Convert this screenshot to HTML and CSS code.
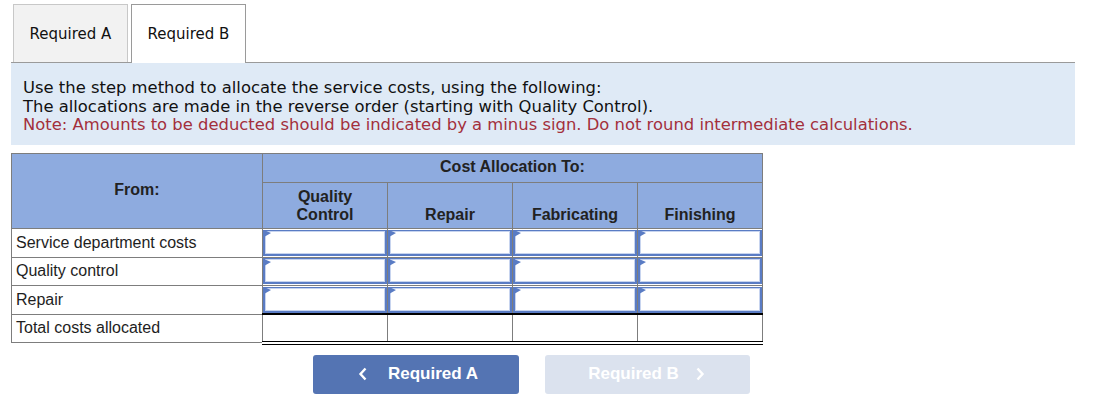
FILE: index.html
```html
<!DOCTYPE html>
<html lang="en">
<head>
  <meta charset="UTF-8" />
  <title>Step Method Allocation</title>
  <link rel="stylesheet" href="styles.css">
</head>
<body>
  <div class="tabs">
    <div class="tab">Required A</div>
    <div class="tab active">Required B</div>
  </div>

  <div class="info">
    <div>Use the step method to allocate the service costs, using the following:</div>
    <div>The allocations are made in the reverse order (starting with Quality Control).</div>
    <div class="note">Note: Amounts to be deducted should be indicated by a minus sign. Do not round intermediate calculations.</div>
  </div>

  <table class="alloc">
    <thead>
      <tr>
        <th rowspan="2" class="from">From:</th>
        <th colspan="4" class="group">Cost Allocation To:</th>
      </tr>
      <tr class="dept">
        <th>Quality<br>Control</th>
        <th>Repair</th>
        <th>Fabricating</th>
        <th>Finishing</th>
      </tr>
    </thead>
    <tbody>
      <tr>
        <td class="label">Service department costs</td>
        <td class="cell"><input type="text"></td>
        <td class="cell"><input type="text"></td>
        <td class="cell"><input type="text"></td>
        <td class="cell"><input type="text"></td>
      </tr>
      <tr>
        <td class="label">Quality control</td>
        <td class="cell"><input type="text"></td>
        <td class="cell"><input type="text"></td>
        <td class="cell"><input type="text"></td>
        <td class="cell"><input type="text"></td>
      </tr>
      <tr>
        <td class="label">Repair</td>
        <td class="cell"><input type="text"></td>
        <td class="cell"><input type="text"></td>
        <td class="cell"><input type="text"></td>
        <td class="cell"><input type="text"></td>
      </tr>
      <tr class="total">
        <td class="label">Total costs allocated</td>
        <td class="sum"></td>
        <td class="sum"></td>
        <td class="sum"></td>
        <td class="sum"></td>
      </tr>
    </tbody>
  </table>

  <div class="nav">
    <button class="nav-btn prev">
      <svg width="10" height="14" viewBox="0 0 10 14"><path d="M7.5 1.5 L2.5 7 L7.5 12.5" fill="none" stroke="#fff" stroke-width="2.4"/></svg>
      <span>Required A</span>
    </button>
    <button class="nav-btn next" disabled>
      <span>Required B</span>
      <svg width="10" height="14" viewBox="0 0 10 14"><path d="M2.5 1.5 L7.5 7 L2.5 12.5" fill="none" stroke="#fff" stroke-width="2.4"/></svg>
    </button>
  </div>
</body>
</html>
```

FILE: styles.css
```css
* {
  box-sizing: border-box;
}
body {
  margin: 0;
  padding: 4px 21px 0 11px;
  font-family: "DejaVu Sans", Verdana, sans-serif;
  color: #1a1a1a;
  background: #ffffff;
}
.tabs {
  display: flex;
  gap: 3px;
  padding-left: 2px;
  border-bottom: 1px solid #9a9a9a;
  width: 1064px;
}
.tab {
  width: 115px;
  height: 58px;
  display: flex;
  align-items: center;
  justify-content: center;
  font-size: 15px;
  color: #111;
  background: #f2f2f2;
  border: 1px solid #c8c8c8;
  border-bottom: none;
}
.tab.active {
  background: #ffffff;
  border-color: #9a9a9a;
  margin-bottom: -1px;
  height: 59px;
}
.info {
  width: 1064px;
  height: 82px;
  background: #dfeaf6;
  padding: 16px 12px 0;
  font-size: 16.4px;
  line-height: 18.5px;
  color: #111;
}
.info .note {
  color: #a3303c;
}
.alloc {
  margin-top: 8px;
  border-collapse: collapse;
  font-family: "Liberation Sans", Arial, sans-serif;
  font-size: 16px;
  color: #1e1e1e;
}
.alloc th {
  background: #8eabdf;
  border: 1px solid #7d7d7d;
  font-weight: bold;
  color: #222;
  padding: 0;
}
.alloc th.from {
  width: 251px;
  vertical-align: middle;
  padding-bottom: 2px;
}
.alloc th.group {
  height: 29px;
  padding-bottom: 2px;
}
.alloc tr.dept th {
  width: 125px;
  height: 46px;
  vertical-align: bottom;
  padding-bottom: 4px;
  line-height: 18px;
}
.alloc td {
  border: 1px solid #7d7d7d;
  height: 28.5px;
  padding: 0;
}
.alloc td.label {
  padding-left: 4px;
}
.alloc td.cell {
  position: relative;
  padding: 0;
}
.alloc td.cell::before {
  content: "";
  position: absolute;
  top: 1px;
  left: 1px;
  border-top: 3px solid transparent;
  border-bottom: 4px solid transparent;
  border-left: 7px solid #5a7cc4;
}
.alloc td.cell input {
  display: block;
  width: 100%;
  height: 26px;
  border: 2px solid #5a7cc4;
  border-top-width: 1px;
  box-shadow: inset 0 0 0 1px #c7d4ef;
  background: #fff;
  margin: 0;
  outline: none;
}
.alloc tr.total td.sum {
  border-top: 2px solid #000;
  border-bottom: 4px double #000;
}
.nav {
  display: flex;
  gap: 26px;
  margin: 10px 0 0 302px;
}
.nav-btn {
  width: 206px;
  height: 39px;
  border: none;
  border-radius: 3px;
  font-family: "Liberation Sans", Arial, sans-serif;
  font-weight: bold;
  font-size: 17px;
  color: #ffffff;
  display: flex;
  align-items: center;
  justify-content: center;
  gap: 20px;
  padding: 0;
}
.nav-btn.prev {
  background: #5474b3;
  padding-left: 4px;
}
.nav-btn.next {
  background: #dbe2ee;
  width: 205px;
  gap: 16px;
  padding-right: 2px;
}
```
